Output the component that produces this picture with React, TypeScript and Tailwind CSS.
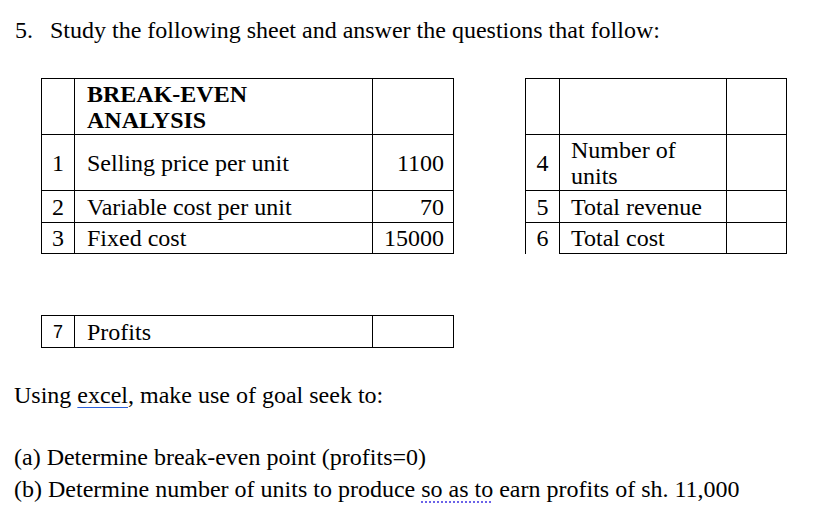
import React from 'react';

const cell = "border border-black p-0 align-middle";

const leftRows = [
  { n: '1', label: 'Selling price per unit', value: '1100', h: 'h-[56px]' },
  { n: '2', label: 'Variable cost per unit', value: '70', h: 'h-[32px]' },
  { n: '3', label: 'Fixed cost', value: '15000', h: 'h-[31px]' },
];

const rightRows = [
  { n: '4', label: 'Number of units', h: 'h-[56px]' },
  { n: '5', label: 'Total revenue', h: 'h-[32px]' },
  { n: '6', label: 'Total cost', h: 'h-[31px]' },
];

export default function App() {
  return (
    <div className="w-[814px] h-[508px] bg-white text-black overflow-hidden pt-[17px] pl-[14px] font-['Liberation_Serif',serif] text-[24px] leading-[26px]">
      <p className="flex">
        <span className="w-[36px] pl-[1px]">5.</span>
        <span>Study the following sheet and answer the questions that follow:</span>
      </p>

      <div className="flex mt-[35px] ml-[27px] gap-[71px] items-start">
        <table className="table-fixed border-collapse">
          <colgroup>
            <col className="w-[33px]" />
            <col className="w-[298px]" />
            <col className="w-[81px]" />
          </colgroup>
          <tbody>
            <tr className="h-[56px]">
              <td className={cell}></td>
              <td className={`${cell} pl-[12px] font-bold leading-[26px]`}>
                BREAK-EVEN
                <br />
                ANALYSIS
              </td>
              <td className={cell}></td>
            </tr>
            {leftRows.map((r) => (
              <tr key={r.n} className={r.h}>
                <td className={`${cell} text-center`}>{r.n}</td>
                <td className={`${cell} pl-[12px]`}>{r.label}</td>
                <td className={`${cell} text-right pr-[9px]`}>{r.value}</td>
              </tr>
            ))}
          </tbody>
        </table>

        <table className="table-fixed border-collapse">
          <colgroup>
            <col className="w-[34px]" />
            <col className="w-[167px]" />
            <col className="w-[60px]" />
          </colgroup>
          <tbody>
            <tr className="h-[56px]">
              <td className={cell}></td>
              <td className={cell}></td>
              <td className={cell}></td>
            </tr>
            {rightRows.map((r, i) => (
              <tr key={r.n} className={r.h}>
                <td className={`${cell} text-center ${i === 2 ? 'border-b-0' : ''}`}>{r.n}</td>
                <td className={`${cell} pl-[11px] pr-[20px]`}>{r.label}</td>
                <td className={cell}></td>
              </tr>
            ))}
          </tbody>
        </table>
      </div>

      <table className="table-fixed border-collapse mt-[61px] ml-[27px]">
        <colgroup>
          <col className="w-[33px]" />
          <col className="w-[298px]" />
          <col className="w-[81px]" />
        </colgroup>
        <tbody>
          <tr className="h-[32px]">
            <td className={`${cell} text-center font-['Liberation_Sans',sans-serif] text-[18px]`}>7</td>
            <td className={`${cell} pl-[12px]`}>Profits</td>
            <td className={cell}></td>
          </tr>
        </tbody>
      </table>

      <p className="mt-[34px]">
        Using{' '}
        <span className="underline decoration-[#2b5fd9] decoration-1 underline-offset-[4px]">excel</span>
        , make use of goal seek to:
      </p>

      <div className="mt-[33px] leading-[32px]">
        <p>(a) Determine break-even point (profits=0)</p>
        <p>
          (b) Determine number of units to produce{' '}
          <span className="underline decoration-dotted decoration-[#6b63e8] decoration-2 underline-offset-[4px]">so as to</span>{' '}
          earn profits of sh. 11,000
        </p>
      </div>
    </div>
  );
}
